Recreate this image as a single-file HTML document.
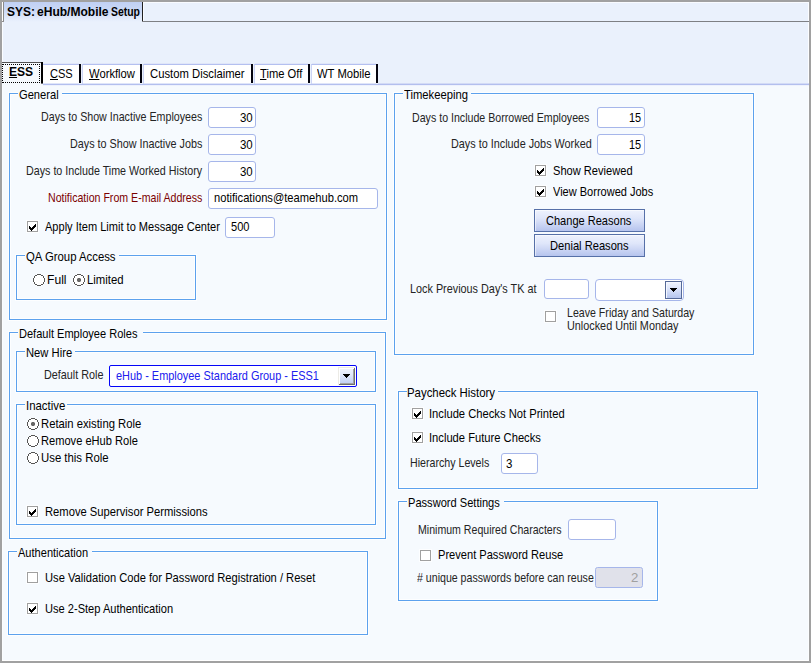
<!DOCTYPE html>
<html><head><meta charset="utf-8"><title>SYS: eHub/Mobile Setup</title>
<style>
html,body{margin:0;padding:0;overflow:hidden;}
body{width:811px;height:663px;overflow:hidden;background:#a1a1a1;font-family:"Liberation Sans",sans-serif;font-size:13px;line-height:13px;color:#000;position:relative;}
#top{position:absolute;left:2px;top:2px;width:807px;height:82px;background:#eaf1fc;}
#page{position:absolute;left:2px;top:84px;width:807px;height:577px;background:#f6fafe;}
#pagel{position:absolute;left:2px;top:22px;width:1px;height:639px;background:#fbfdff;}
#pager{position:absolute;left:808px;top:2px;width:1px;height:659px;background:#fcfdff;}
#pageb{position:absolute;left:2px;top:660px;width:807px;height:1px;background:#ffffff;}
#lav{position:absolute;left:43px;top:84px;width:766px;height:1px;background:#b3bfee;}
#lav2{position:absolute;left:378px;top:83px;width:431px;height:1px;background:#d3dbf6;}
#lav3{position:absolute;left:43px;top:85px;width:766px;height:1px;background:#eef2fd;}
#ttab{position:absolute;left:4px;top:2px;width:138px;height:20px;background:linear-gradient(#c0d0f4,#cbd9f6 45%,#e5edfb 88%,#eaf1fc);}
#ttabl{position:absolute;left:2px;top:2px;width:1px;height:20px;background:#fff;}
#ttabl2{position:absolute;left:3px;top:2px;width:1px;height:20px;background:#8a8a8a;}
#ttabc{position:absolute;left:2px;top:21px;width:2px;height:1px;background:#8f8f8f;}
#ttabr{position:absolute;left:142px;top:2px;width:1px;height:20px;background:#202020;}
#tline{position:absolute;left:142px;top:21px;width:667px;height:1px;background:#7e8084;}
#tline2{position:absolute;left:143px;top:2px;width:666px;height:1px;background:#f9fbff;}
#tline3{position:absolute;left:143px;top:2px;width:1px;height:19px;background:#f9fbff;}
.t{position:absolute;white-space:nowrap;transform-origin:0 0;display:block;}
.t u{text-decoration:underline;text-underline-offset:1px;text-decoration-thickness:1px;}
.g{position:absolute;border:1px solid #5ca1ed;box-sizing:content-box;box-shadow:0 0 0 1px rgba(255,255,255,.75), inset 0 0 0 1px rgba(255,255,255,.75);}
.gap{position:absolute;height:3px;margin-top:-1px;background:#f6fafe;}
.in{position:absolute;border:1px solid #a6b6ea;border-radius:3px;background:#fff;}
.in.dis{background:#e0e1ea;border-radius:2.5px;}
.cb{position:absolute;width:9px;height:9px;border:1px solid #a0a0a0;background:#fff;box-shadow:0 0 0 1px rgba(255,255,255,.75);}
.cb svg{position:absolute;left:0;top:0;}
.rb{position:absolute;overflow:visible;}
.tab{position:absolute;top:64px;height:19px;background:linear-gradient(#fff 0,#fff 18px,#dfe5f9 18px);border-top:1px solid #b4c0f0;border-left:1px solid #ccd4f5;}
.tab::before{content:'';position:absolute;left:0;right:0;top:-2px;height:1px;background:#e0e6f9;}
.tabr{position:absolute;top:64px;width:2px;height:19px;background:#04040f;}
.tabsel{position:absolute;left:2px;top:62px;width:39px;height:22px;background:#f6fafe;border-top:1px solid #505050;box-sizing:content-box;}
.tabselr{position:absolute;left:41px;top:62px;width:2px;height:22px;background:linear-gradient(#000 0,#000 21px,#6a6a70 21px);}
.focus{position:absolute;left:2px;top:64px;width:36px;height:17px;border:1px dotted #000;}
.btn{position:absolute;left:534px;width:109px;height:21px;border:1px solid #5670a8;background:linear-gradient(#eef2fd,#dfe6fa 40%,#b6c4ee);box-shadow:inset 1px 1px 0 rgba(255,255,255,.55);}
.combo1{position:absolute;left:109px;top:365px;width:246px;height:20px;border:1px solid #0505f8;border-radius:2px;background:#fff;}
.dd1{position:absolute;left:338px;top:367px;width:17px;height:18px;background:linear-gradient(#f3f6fd,#e3eafb 40%,#bccbf2);box-shadow:inset 1px 1px 0 #ecebe6, inset -1px -1px 0 #6e6e6e, inset 2px 2px 0 #fff, inset -2px -2px 0 #a2a2a2;}
.combo2{position:absolute;left:595px;top:279px;width:87px;height:20px;border:1px solid #a6b6ea;border-radius:4px;background:#fff;}
.dd2{position:absolute;left:665px;top:281px;width:15px;height:16px;border:1px solid #566a98;background:linear-gradient(#f0f4fd,#dde5fa 40%,#b6c6ef);box-shadow:inset 1px 1px 0 #f4f7ff;}
.tri{position:absolute;}
</style></head><body>
<div id="top"></div><div id="page"></div><div id="pagel"></div><div id="pager"></div><div id="pageb"></div>
<div id="lav2"></div><div id="lav3"></div><div id="lav"></div>
<div id="ttab"></div><div id="ttabl"></div><div id="ttabl2"></div><div id="ttabc"></div><div id="ttabr"></div><div id="tline"></div><div id="tline2"></div><div id="tline3"></div>
<div class="tab" style="left:42px;width:36px"></div><div class="tabr" style="left:79px"></div>
<div class="tab" style="left:82px;width:57px"></div><div class="tabr" style="left:140px"></div>
<div class="tab" style="left:143px;width:107px"></div><div class="tabr" style="left:251px"></div>
<div class="tab" style="left:254px;width:53px"></div><div class="tabr" style="left:308px"></div>
<div class="tab" style="left:311px;width:64px"></div><div class="tabr" style="left:376px"></div>
<div class="tabsel"></div><div class="tabselr"></div><div class="focus"></div>
<div class="g" style="left:9px;top:93px;width:376px;height:225px"></div>
<div class="gap" style="left:18px;top:93px;width:44px"></div>
<div class="g" style="left:16px;top:255px;width:178px;height:43px"></div>
<div class="gap" style="left:25px;top:255px;width:94px"></div>
<div class="g" style="left:9px;top:332px;width:375px;height:205px"></div>
<div class="gap" style="left:18px;top:332px;width:125px"></div>
<div class="g" style="left:16px;top:351px;width:358px;height:39px"></div>
<div class="gap" style="left:25px;top:351px;width:50px"></div>
<div class="g" style="left:16px;top:404px;width:358px;height:119px"></div>
<div class="gap" style="left:25px;top:404px;width:42px"></div>
<div class="g" style="left:8px;top:551px;width:358px;height:82px"></div>
<div class="gap" style="left:17px;top:551px;width:75px"></div>
<div class="g" style="left:394px;top:93px;width:358px;height:260px"></div>
<div class="gap" style="left:403px;top:93px;width:68px"></div>
<div class="g" style="left:398px;top:391px;width:358px;height:96px"></div>
<div class="gap" style="left:407px;top:391px;width:91px"></div>
<div class="g" style="left:398px;top:501px;width:258px;height:98px"></div>
<div class="gap" style="left:407px;top:501px;width:97px"></div>
<div class="in" style="left:208px;top:107px;width:46px;height:19px"></div>
<div class="in" style="left:208px;top:134px;width:46px;height:19px"></div>
<div class="in" style="left:208px;top:161px;width:46px;height:19px"></div>
<div class="in" style="left:208px;top:188px;width:168px;height:19px"></div>
<div class="in" style="left:225px;top:217px;width:48px;height:19px"></div>
<div class="in" style="left:597px;top:107px;width:46px;height:19px"></div>
<div class="in" style="left:597px;top:134px;width:46px;height:19px"></div>
<div class="in" style="left:544px;top:279px;width:43px;height:18px"></div>
<div class="in" style="left:501px;top:453px;width:35px;height:19px"></div>
<div class="in" style="left:568px;top:519px;width:46px;height:19px"></div>
<div class="in dis" style="left:595px;top:567px;width:46px;height:19px"></div>
<div class="btn" style="top:209px"></div><div class="btn" style="top:234px"></div>
<div class="combo1"></div><div class="dd1"></div><svg class="tri" style="left:343px;top:374px" width="7" height="4" viewBox="0 0 7 4" shape-rendering="crispEdges"><path d="M0 0H7V1H6V2H5V3H4V4H3V3H2V2H1V1H0Z" fill="#000"/></svg>
<div class="combo2"></div><div class="dd2"></div><svg class="tri" style="left:670px;top:288px" width="7" height="4" viewBox="0 0 7 4" shape-rendering="crispEdges"><path d="M0 0H7V1H6V2H5V3H4V4H3V3H2V2H1V1H0Z" fill="#000"/></svg>
<div class="cb on" style="left:27px;top:221px"><svg width="9" height="9" viewBox="0 0 9 9" shape-rendering="crispEdges"><path d="M1 4H2V5H3V6H4V5H5V4H6V3H7V2H8V5H7V6H6V7H5V8H4V9H3V8H2V7H1Z" fill="#000"/></svg></div>
<div class="cb on" style="left:27px;top:506px"><svg width="9" height="9" viewBox="0 0 9 9" shape-rendering="crispEdges"><path d="M1 4H2V5H3V6H4V5H5V4H6V3H7V2H8V5H7V6H6V7H5V8H4V9H3V8H2V7H1Z" fill="#000"/></svg></div>
<div class="cb" style="left:27px;top:572px"></div>
<div class="cb on" style="left:27px;top:603px"><svg width="9" height="9" viewBox="0 0 9 9" shape-rendering="crispEdges"><path d="M1 4H2V5H3V6H4V5H5V4H6V3H7V2H8V5H7V6H6V7H5V8H4V9H3V8H2V7H1Z" fill="#000"/></svg></div>
<div class="cb on" style="left:535px;top:165px"><svg width="9" height="9" viewBox="0 0 9 9" shape-rendering="crispEdges"><path d="M1 4H2V5H3V6H4V5H5V4H6V3H7V2H8V5H7V6H6V7H5V8H4V9H3V8H2V7H1Z" fill="#000"/></svg></div>
<div class="cb on" style="left:535px;top:186px"><svg width="9" height="9" viewBox="0 0 9 9" shape-rendering="crispEdges"><path d="M1 4H2V5H3V6H4V5H5V4H6V3H7V2H8V5H7V6H6V7H5V8H4V9H3V8H2V7H1Z" fill="#000"/></svg></div>
<div class="cb" style="left:545px;top:311px"></div>
<div class="cb on" style="left:412px;top:408px"><svg width="9" height="9" viewBox="0 0 9 9" shape-rendering="crispEdges"><path d="M1 4H2V5H3V6H4V5H5V4H6V3H7V2H8V5H7V6H6V7H5V8H4V9H3V8H2V7H1Z" fill="#000"/></svg></div>
<div class="cb on" style="left:412px;top:432px"><svg width="9" height="9" viewBox="0 0 9 9" shape-rendering="crispEdges"><path d="M1 4H2V5H3V6H4V5H5V4H6V3H7V2H8V5H7V6H6V7H5V8H4V9H3V8H2V7H1Z" fill="#000"/></svg></div>
<div class="cb" style="left:420px;top:550px"></div>
<svg class="rb" style="left:33px;top:274px" width="12" height="12" viewBox="0 0 12 12" shape-rendering="crispEdges"><circle cx="6" cy="6" r="6.6" fill="#fbfdff" shape-rendering="auto"/><path d="M4 1H8V2H10V4H11V8H10V10H8V11H4V10H2V8H1V4H2V2H4Z" fill="#fff"/><path d="M4 0H8V1H4ZM2 1H4V2H2ZM8 1H10V2H8ZM1 2H2V4H1ZM10 2H11V4H10ZM0 4H1V8H0ZM11 4H12V8H11ZM1 8H2V10H1ZM10 8H11V10H10ZM2 10H4V11H2ZM8 10H10V11H8ZM4 11H8V12H4Z" fill="#555"/></svg>
<svg class="rb" style="left:73px;top:274px" width="12" height="12" viewBox="0 0 12 12" shape-rendering="crispEdges"><circle cx="6" cy="6" r="6.6" fill="#fbfdff" shape-rendering="auto"/><path d="M4 1H8V2H10V4H11V8H10V10H8V11H4V10H2V8H1V4H2V2H4Z" fill="#fff"/><path d="M4 0H8V1H4ZM2 1H4V2H2ZM8 1H10V2H8ZM1 2H2V4H1ZM10 2H11V4H10ZM0 4H1V8H0ZM11 4H12V8H11ZM1 8H2V10H1ZM10 8H11V10H10ZM2 10H4V11H2ZM8 10H10V11H8ZM4 11H8V12H4Z" fill="#555"/><path d="M5 4H7V5H8V7H7V8H5V7H4V5H5Z" fill="#666"/><path d="M4 4h1v1h-1zM7 4h1v1h-1zM4 7h1v1h-1zM7 7h1v1h-1z" fill="#b9b9b9"/></svg>
<svg class="rb" style="left:27px;top:418px" width="12" height="12" viewBox="0 0 12 12" shape-rendering="crispEdges"><circle cx="6" cy="6" r="6.6" fill="#fbfdff" shape-rendering="auto"/><path d="M4 1H8V2H10V4H11V8H10V10H8V11H4V10H2V8H1V4H2V2H4Z" fill="#fff"/><path d="M4 0H8V1H4ZM2 1H4V2H2ZM8 1H10V2H8ZM1 2H2V4H1ZM10 2H11V4H10ZM0 4H1V8H0ZM11 4H12V8H11ZM1 8H2V10H1ZM10 8H11V10H10ZM2 10H4V11H2ZM8 10H10V11H8ZM4 11H8V12H4Z" fill="#555"/><path d="M5 4H7V5H8V7H7V8H5V7H4V5H5Z" fill="#666"/><path d="M4 4h1v1h-1zM7 4h1v1h-1zM4 7h1v1h-1zM7 7h1v1h-1z" fill="#b9b9b9"/></svg>
<svg class="rb" style="left:27px;top:435px" width="12" height="12" viewBox="0 0 12 12" shape-rendering="crispEdges"><circle cx="6" cy="6" r="6.6" fill="#fbfdff" shape-rendering="auto"/><path d="M4 1H8V2H10V4H11V8H10V10H8V11H4V10H2V8H1V4H2V2H4Z" fill="#fff"/><path d="M4 0H8V1H4ZM2 1H4V2H2ZM8 1H10V2H8ZM1 2H2V4H1ZM10 2H11V4H10ZM0 4H1V8H0ZM11 4H12V8H11ZM1 8H2V10H1ZM10 8H11V10H10ZM2 10H4V11H2ZM8 10H10V11H8ZM4 11H8V12H4Z" fill="#555"/></svg>
<svg class="rb" style="left:27px;top:452px" width="12" height="12" viewBox="0 0 12 12" shape-rendering="crispEdges"><circle cx="6" cy="6" r="6.6" fill="#fbfdff" shape-rendering="auto"/><path d="M4 1H8V2H10V4H11V8H10V10H8V11H4V10H2V8H1V4H2V2H4Z" fill="#fff"/><path d="M4 0H8V1H4ZM2 1H4V2H2ZM8 1H10V2H8ZM1 2H2V4H1ZM10 2H11V4H10ZM0 4H1V8H0ZM11 4H12V8H11ZM1 8H2V10H1ZM10 8H11V10H10ZM2 10H4V11H2ZM8 10H10V11H8ZM4 11H8V12H4Z" fill="#555"/></svg>
<span class="t" id="t0" style="left:7.13px;top:5px;transform:scaleX(0.9220);font-weight:bold;">SYS:</span>
<span class="t" id="t1" style="left:36.66px;top:5px;transform:scaleX(0.9259);font-weight:bold;">eHub/Mobile</span>
<span class="t" id="t2" style="left:111.19px;top:5px;transform:scaleX(0.8031);font-weight:bold;">Setup</span>
<span class="t" id="t3" style="left:9.07px;top:65px;transform:scaleX(0.9292);font-weight:bold;"><u>E</u>SS</span>
<span class="t" id="t4" style="left:49.74px;top:67px;transform:scaleX(0.8511);"><u>C</u>SS</span>
<span class="t" id="t5" style="left:89.12px;top:67px;transform:scaleX(0.8633);"><u>W</u>orkflow</span>
<span class="t" id="t6" style="left:149.75px;top:67px;transform:scaleX(0.8676);">Custom Disclaimer</span>
<span class="t" id="t7" style="left:260.40px;top:67px;transform:scaleX(0.8608);"><u>T</u>ime Off</span>
<span class="t" id="t8" style="left:316.92px;top:67px;transform:scaleX(0.8646);">WT Mobile</span>
<span class="t" id="t9" style="left:18.66px;top:88px;transform:scaleX(0.8566);">General</span>
<span class="t" id="t10" style="left:41.00px;top:110px;transform:scaleX(0.8206);color:#242424;">Days to Show Inactive Employees</span>
<span class="t" id="t11" style="left:70.10px;top:137px;transform:scaleX(0.8288);color:#242424;">Days to Show Inactive Jobs</span>
<span class="t" id="t12" style="left:26.20px;top:164px;transform:scaleX(0.8244);color:#242424;">Days to Include Time Worked History</span>
<span class="t" id="t13" style="left:47.82px;top:191px;transform:scaleX(0.8154);color:#7c0000;">Notification From E-mail Address</span>
<span class="t" id="t14" style="left:45.00px;top:220px;transform:scaleX(0.8489);">Apply Item Limit to Message Center</span>
<span class="t" id="t15" style="left:240.31px;top:111px;transform:scaleX(0.8814);">30</span>
<span class="t" id="t16" style="left:240.31px;top:138px;transform:scaleX(0.8814);">30</span>
<span class="t" id="t17" style="left:240.31px;top:165px;transform:scaleX(0.8814);">30</span>
<span class="t" id="t18" style="left:214.03px;top:191px;transform:scaleX(0.8583);">notifications@teamehub.com</span>
<span class="t" id="t19" style="left:230.59px;top:220px;transform:scaleX(0.8533);">500</span>
<span class="t" id="t20" style="left:25.73px;top:250px;transform:scaleX(0.8726);">QA Group Access</span>
<span class="t" id="t21" style="left:46.68px;top:273px;transform:scaleX(0.9323);">Full</span>
<span class="t" id="t22" style="left:86.87px;top:273px;transform:scaleX(0.8731);">Limited</span>
<span class="t" id="t23" style="left:18.79px;top:327px;transform:scaleX(0.8490);">Default Employee Roles</span>
<span class="t" id="t24" style="left:25.68px;top:346px;transform:scaleX(0.8627);">New Hire</span>
<span class="t" id="t25" style="left:44.40px;top:368px;transform:scaleX(0.8306);color:#242424;">Default Role</span>
<span class="t" id="t26" style="left:115.97px;top:369px;transform:scaleX(0.8408);color:#2020ee;">eHub - Employee Standard Group - ESS1</span>
<span class="t" id="t27" style="left:25.80px;top:399px;transform:scaleX(0.8775);">Inactive</span>
<span class="t" id="t28" style="left:41.15px;top:417px;transform:scaleX(0.8668);">Retain existing Role</span>
<span class="t" id="t29" style="left:40.79px;top:434px;transform:scaleX(0.8540);">Remove eHub Role</span>
<span class="t" id="t30" style="left:41.00px;top:451px;transform:scaleX(0.8742);">Use this Role</span>
<span class="t" id="t31" style="left:44.98px;top:505px;transform:scaleX(0.8620);">Remove Supervisor Permissions</span>
<span class="t" id="t32" style="left:17.91px;top:546px;transform:scaleX(0.8500);">Authentication</span>
<span class="t" id="t33" style="left:45.14px;top:571px;transform:scaleX(0.8585);">Use Validation Code for Password Registration / Reset</span>
<span class="t" id="t34" style="left:45.28px;top:602px;transform:scaleX(0.8524);">Use 2-Step Authentication</span>
<span class="t" id="t35" style="left:403.94px;top:88px;transform:scaleX(0.8647);">Timekeeping</span>
<span class="t" id="t36" style="left:412.20px;top:111px;transform:scaleX(0.8178);color:#242424;">Days to Include Borrowed Employees</span>
<span class="t" id="t37" style="left:450.79px;top:137px;transform:scaleX(0.8333);color:#242424;">Days to Include Jobs Worked</span>
<span class="t" id="t38" style="left:628.83px;top:111px;transform:scaleX(0.8375);">15</span>
<span class="t" id="t39" style="left:628.83px;top:138px;transform:scaleX(0.8375);">15</span>
<span class="t" id="t40" style="left:552.87px;top:164px;transform:scaleX(0.8539);">Show Reviewed</span>
<span class="t" id="t41" style="left:553.34px;top:185px;transform:scaleX(0.8476);">View Borrowed Jobs</span>
<span class="t" id="t42" style="left:546.26px;top:214px;transform:scaleX(0.8492);">Change Reasons</span>
<span class="t" id="t43" style="left:549.95px;top:239px;transform:scaleX(0.8568);">Denial Reasons</span>
<span class="t" id="t44" style="left:409.60px;top:282px;transform:scaleX(0.8332);color:#242424;">Lock Previous Day's TK at</span>
<span class="t" id="t45" style="left:566.82px;top:306px;transform:scaleX(0.8163);color:#242424;">Leave Friday and Saturday</span>
<span class="t" id="t46" style="left:566.84px;top:319px;transform:scaleX(0.8333);color:#242424;">Unlocked Until Monday</span>
<span class="t" id="t47" style="left:407.24px;top:386px;transform:scaleX(0.8768);">Paycheck History</span>
<span class="t" id="t48" style="left:429.34px;top:407px;transform:scaleX(0.8610);">Include Checks Not Printed</span>
<span class="t" id="t49" style="left:429.07px;top:431px;transform:scaleX(0.8602);">Include Future Checks</span>
<span class="t" id="t50" style="left:410.22px;top:456px;transform:scaleX(0.8182);color:#242424;">Hierarchy Levels</span>
<span class="t" id="t51" style="left:505.57px;top:457px;transform:scaleX(0.8835);">3</span>
<span class="t" id="t52" style="left:407.79px;top:496px;transform:scaleX(0.8526);">Password Settings</span>
<span class="t" id="t53" style="left:417.62px;top:523px;transform:scaleX(0.8143);color:#242424;">Minimum Required Characters</span>
<span class="t" id="t54" style="left:437.96px;top:548px;transform:scaleX(0.8531);">Prevent Password Reuse</span>
<span class="t" id="t55" style="left:417.00px;top:571px;transform:scaleX(0.8155);color:#242424;"># unique passwords before can reuse</span>
<span class="t" id="t56" style="left:630.91px;top:571px;transform:scaleX(1.0174);color:#a0a0a0;">2</span>
</body></html>
